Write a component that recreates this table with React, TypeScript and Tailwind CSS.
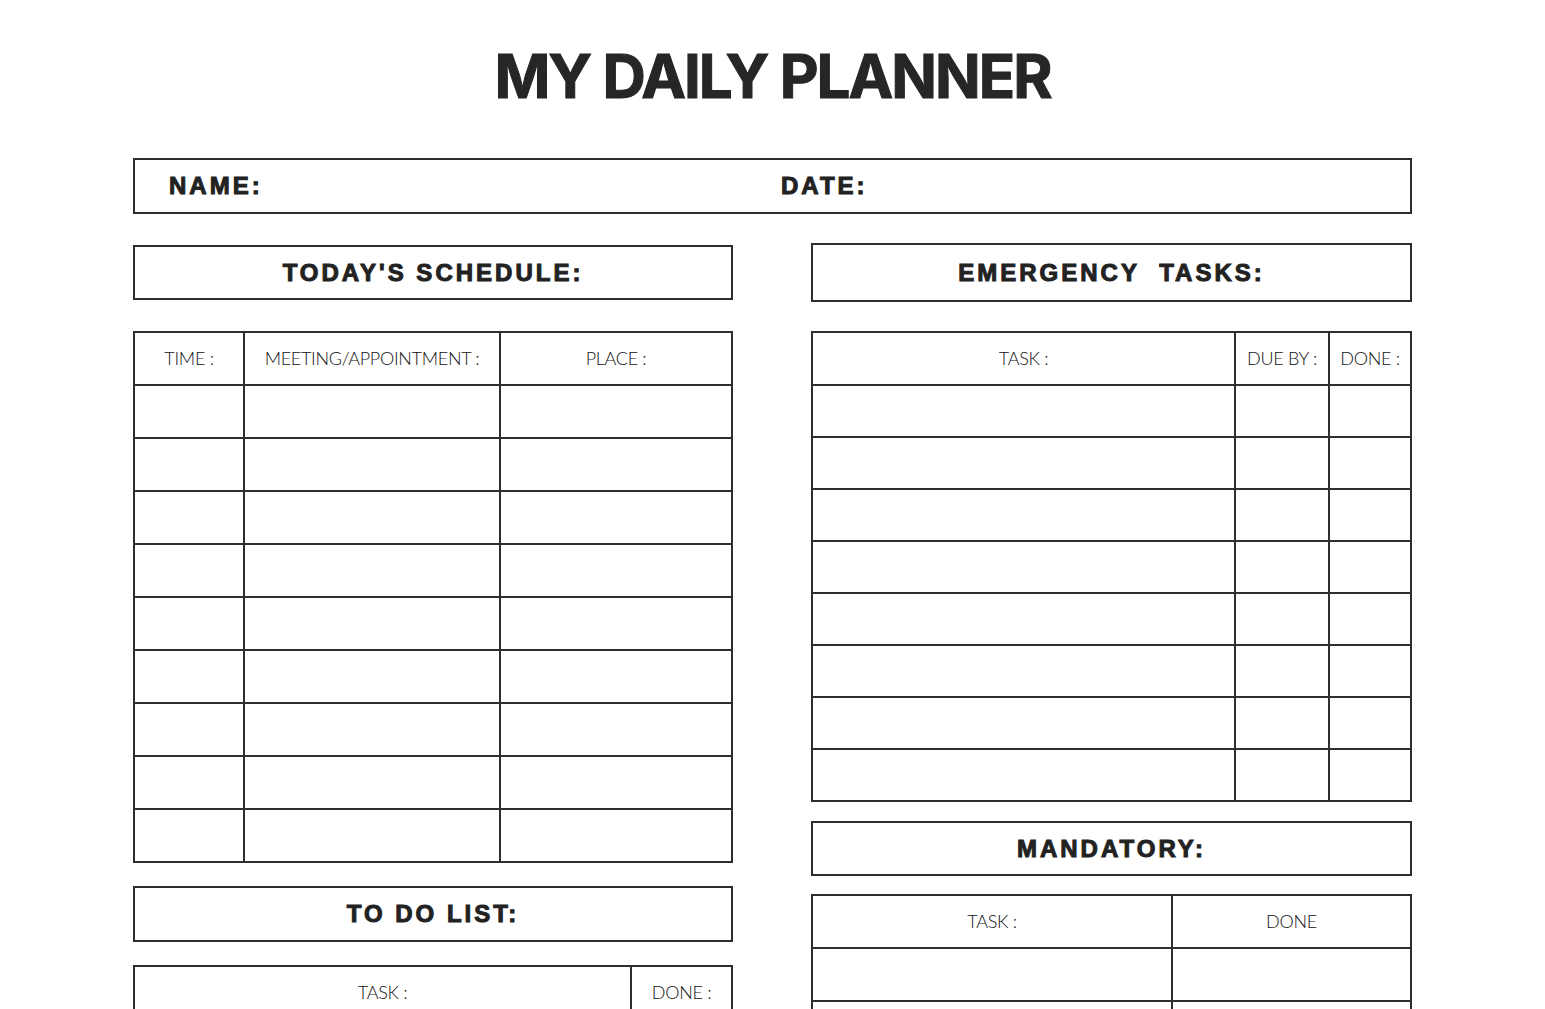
const heading = "font-['Liberation_Sans',Arial,sans-serif] font-bold text-[24px] tracking-[3px] text-[#222] [-webkit-text-stroke:1px_#222]";
const thin = "font-['Lato','Noto_Sans',sans-serif] font-light text-[18px] tracking-[-0.3px] text-[#111]";
const line = "border-[#2e2e2e]";

interface GridTableProps {
  cols: string;
  headers: string[];
  rows: number;
  rowH: string;
}

const GridTable = ({ cols, headers, rows, rowH }: GridTableProps) => (
  <div className={`border-2 ${line}`}>
    <div className={`grid ${cols} h-[51px]`}>
      {headers.map((h, i) => (
        <div
          key={h}
          className={`flex items-center justify-center ${thin} ${i > 0 ? `border-l-2 ${line}` : ''}`}
        >
          {h}
        </div>
      ))}
    </div>
    {Array.from({ length: rows }).map((_, r) => (
      <div key={r} className={`grid ${cols} ${rowH} border-t-2 ${line}`}>
        {headers.map((h, i) => (
          <div key={h} className={i > 0 ? `border-l-2 ${line}` : ''} />
        ))}
      </div>
    ))}
  </div>
);

const SectionBox = ({ label, h }: { label: string; h: string }) => (
  <div className={`flex ${h} items-center justify-center border-2 ${line}`}>
    <span className={heading}>{label}</span>
  </div>
);

export default function App() {
  return (
    <div className="h-[1009px] overflow-hidden bg-white">
      <header className="flex h-[158px] justify-center pt-[46px]">
        <h1 className="font-['Inter',sans-serif] text-[60px] font-bold leading-none tracking-[-2px] text-[#262626] [-webkit-text-stroke:1px_#262626]">
          MY DAILY PLANNER
        </h1>
      </header>

      <div className="ml-[133px] w-[1279px]">
        <div className={`flex h-[56px] items-center border-2 ${line} pl-[34px]`}>
          <span className={`${heading} w-[612px]`}>NAME:</span>
          <span className={heading}>DATE:</span>
        </div>

        <div className="flex items-start gap-[78px]">
          <div className="flex w-[600px] flex-col pt-[31px]">
            <SectionBox label="TODAY'S SCHEDULE:" h="h-[55px]" />
            <div className="mt-[31px]">
              <GridTable
                cols="grid-cols-[108px_256px_1fr]"
                headers={['TIME :', 'MEETING/APPOINTMENT :', 'PLACE :']}
                rows={9}
                rowH="h-[53px]"
              />
            </div>
            <div className="mt-[23px]">
              <SectionBox label="TO DO LIST:" h="h-[56px]" />
            </div>
            <div className="mt-[23px]">
              <GridTable
                cols="grid-cols-[495px_1fr]"
                headers={['TASK :', 'DONE :']}
                rows={4}
                rowH="h-[53px]"
              />
            </div>
          </div>

          <div className="flex w-[601px] flex-col pt-[29px]">
            <SectionBox label={'EMERGENCY\u00a0 TASKS:'} h="h-[59px]" />
            <div className="mt-[29px]">
              <GridTable
                cols="grid-cols-[421px_94px_1fr]"
                headers={['TASK :', 'DUE BY :', 'DONE :']}
                rows={8}
                rowH="h-[52px]"
              />
            </div>
            <div className="mt-[19px]">
              <SectionBox label="MANDATORY:" h="h-[55px]" />
            </div>
            <div className="mt-[18px]">
              <GridTable
                cols="grid-cols-[358px_1fr]"
                headers={['TASK :', 'DONE']}
                rows={4}
                rowH="h-[53px]"
              />
            </div>
          </div>
        </div>
      </div>
    </div>
  );
}
